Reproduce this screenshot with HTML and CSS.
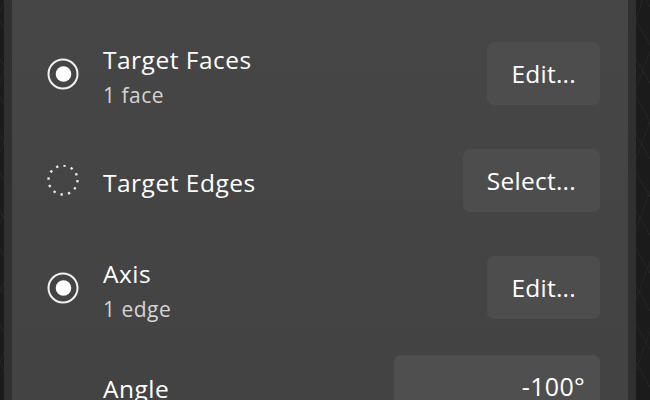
FILE: index.html
```html
<!DOCTYPE html>
<html>
<head>
<meta charset="utf-8">
<link rel="stylesheet" href="styles.css">
</head>
<body>
<div class="frame">
  <div class="panel">
    <div class="row">
      <svg class="icon" viewBox="0 0 32 32" width="32" height="32">
        <circle cx="16" cy="16" r="14.5" fill="none" stroke="#f2f2f2" stroke-width="2"/>
        <circle cx="16.5" cy="16" r="7.8" fill="#ffffff"/>
      </svg>
      <div class="label two">
        <div class="title">Target Faces</div>
        <div class="sub">1 face</div>
      </div>
      <button class="btn">Edit...</button>
    </div>
    <div class="row">
      <svg class="icon" viewBox="0 0 32 32" width="32" height="32">
        <circle cx="16" cy="15" r="14.5" fill="none" stroke="#e6e6e6" stroke-width="2.4" stroke-dasharray="2.4 5.19"/>
      </svg>
      <div class="label">
        <div class="title">Target Edges</div>
      </div>
      <button class="btn">Select...</button>
    </div>
    <div class="row">
      <svg class="icon" viewBox="0 0 32 32" width="32" height="32">
        <circle cx="16" cy="16" r="14.5" fill="none" stroke="#f2f2f2" stroke-width="2"/>
        <circle cx="16.5" cy="16" r="7.8" fill="#ffffff"/>
      </svg>
      <div class="label two">
        <div class="title">Axis</div>
        <div class="sub">1 edge</div>
      </div>
      <button class="btn">Edit...</button>
    </div>
    <div class="row angle-row">
      <div class="angle-label">Angle</div>
      <div class="field">-100°</div>
    </div>
  </div>
</div>
</body>
</html>
```

FILE: styles.css
```css
html, body {
  margin: 0;
  padding: 0;
}
body {
  width: 650px;
  height: 400px;
  overflow: hidden;
  background-color: #1b1b1b;
  background-image:
    repeating-linear-gradient(60deg, transparent 0 18px, rgba(255,255,255,0.04) 18px 19px),
    repeating-linear-gradient(-70deg, transparent 0 23px, rgba(255,255,255,0.035) 23px 24px);
  font-family: "Open Sans", "Noto Sans", "Liberation Sans", sans-serif;
  color: #ffffff;
}
.frame {
  margin-left: 4px;
  width: 616px;
  height: 400px;
  padding: 0 8px;
  background: #303030;
}
.panel {
  height: 400px;
  background: linear-gradient(180deg, #464646 0%, #434343 100%);
  padding: 42px 28px 0 35px;
  box-sizing: border-box;
  display: flex;
  flex-direction: column;
  gap: 44px;
}
.row {
  display: flex;
  align-items: center;
  height: 63px;
  flex: none;
}
.icon {
  flex: none;
  display: block;
}
.label {
  margin-left: 24px;
  flex: 1;
  display: flex;
  flex-direction: column;
  padding-top: 4px;
}
.label.two {
  padding-top: 8px;
}
.title {
  font-size: 24.5px;
  line-height: 30px;
  letter-spacing: 0.5px;
}
.sub {
  margin-top: 5px;
  font-size: 21px;
  line-height: 30px;
  color: #d4d4d4;
  letter-spacing: 0.5px;
}
.btn {
  flex: none;
  height: 63px;
  padding: 0 24px;
  border: none;
  border-radius: 7px;
  background: #4d4d4d;
  color: #ffffff;
  font-family: inherit;
  font-size: 24.5px;
  letter-spacing: 0.25px;
}
.angle-row {
  margin-top: -8px;
  align-items: flex-start;
}
.angle-label {
  margin-left: 56px;
  margin-top: 18px;
  flex: 1;
  font-size: 24.5px;
  line-height: 32px;
  letter-spacing: 0.5px;
}
.field {
  width: 206px;
  height: 63px;
  box-sizing: border-box;
  border-radius: 7px;
  background: #4f4f4f;
  text-align: right;
  padding: 15px 15px 0 0;
  font-size: 25px;
  line-height: 32px;
  letter-spacing: 0.3px;
}
```
